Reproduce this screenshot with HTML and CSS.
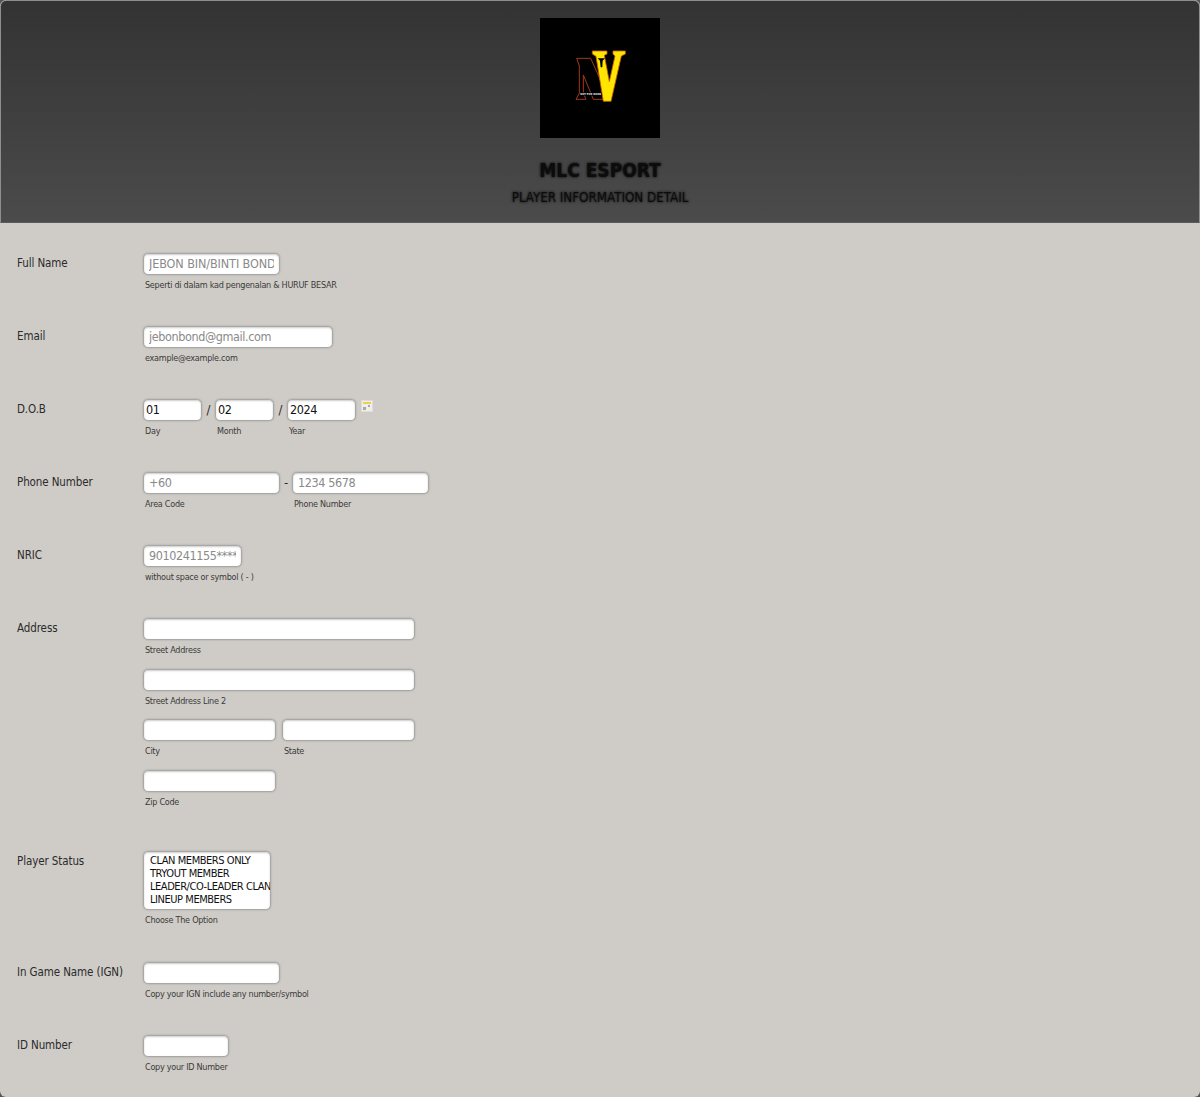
FILE: index.html
```html
<!DOCTYPE html>
<html lang="ms">
<head>
    <meta charset="UTF-8">
    <meta name="viewport" content="width=device-width, initial-scale=1.0">
    <title>MLC ESPORT</title>
    <link rel="stylesheet" href="styles.css">
</head>
<body>
    <div class="form-all">
        <div class="header">
            <div class="logo">
                <svg width="120" height="120" viewBox="0 0 120 120">
                    <g transform="translate(20 22) scale(0.3333)">
                        <path d="M50 55 H92 L135 150 V178 H100 L70 105 V160 L78 178 H48 L58 160 V78 Z" fill="#000" stroke="#a03a1a" stroke-width="3"/>
                        <path d="M97 33 H141 V42 L133 46 L148 125 L165 48 L159 42 V33 H196 V42 L184 48 L153 184 H130 L108 49 L97 42 Z" fill="#ffe600" stroke="#c8640a" stroke-width="2.5"/>
                        <path d="M113 55 H135 L128 62 L127 82 H122 L120 62 Z" fill="#000"/>
                        <rect x="60" y="157" width="64" height="10" fill="#000"/>
                        <text x="92" y="165" class="logo-text" text-anchor="middle">NOT FOR NOOB</text>
                    </g>
                </svg>
            </div>
            <h1>MLC ESPORT</h1>
            <h2>PLAYER INFORMATION DETAIL</h2>
        </div>
        <ul class="form-list">
            <li class="row">
                <label class="row-label">Full Name</label>
                <div class="field">
                    <input class="w-137 caps" type="text" placeholder="JEBON BIN/BINTI BOND">
                    <span class="sub">Seperti di dalam kad pengenalan &amp; HURUF BESAR</span>
                </div>
            </li>
            <li class="row">
                <label class="row-label">Email</label>
                <div class="field">
                    <input class="w-190" type="text" placeholder="jebonbond@gmail.com">
                    <span class="sub">example@example.com</span>
                </div>
            </li>
            <li class="row">
                <label class="row-label">D.O.B</label>
                <div class="inline">
                    <div class="field">
                        <input class="w-59 date" type="text" value="01">
                        <span class="sub">Day</span>
                    </div>
                    <span class="sep">/</span>
                    <div class="field">
                        <input class="w-59 date" type="text" value="02">
                        <span class="sub">Month</span>
                    </div>
                    <span class="sep">/</span>
                    <div class="field">
                        <input class="w-69 date" type="text" value="2024">
                        <span class="sub">Year</span>
                    </div>
                    <svg class="cal" width="12" height="12" viewBox="0 0 12 12">
                        <rect width="12" height="12" fill="#dfddd8"/>
                        <rect x="1" y="1" width="10" height="10" fill="#efeeea"/>
                        <rect x="2" y="2" width="8" height="2" fill="#ecd04e"/>
                        <rect x="2" y="7" width="3" height="3" fill="#a9a9a9"/>
                        <rect x="7" y="5" width="2" height="2" fill="#a9a9a9"/>
                    </svg>
                </div>
            </li>
            <li class="row">
                <label class="row-label">Phone Number</label>
                <div class="inline">
                    <div class="field">
                        <input class="w-137" type="text" placeholder="+60">
                        <span class="sub">Area Code</span>
                    </div>
                    <span class="sep dash">-</span>
                    <div class="field">
                        <input class="w-137" type="text" placeholder="1234 5678">
                        <span class="sub">Phone Number</span>
                    </div>
                </div>
            </li>
            <li class="row">
                <label class="row-label">NRIC</label>
                <div class="field">
                    <input class="w-99" type="text" placeholder="9010241155*****">
                    <span class="sub">without space or symbol ( - )</span>
                </div>
            </li>
            <li class="row row-address">
                <label class="row-label">Address</label>
                <div class="address">
                    <div class="field wide">
                        <input type="text">
                        <span class="sub">Street Address</span>
                    </div>
                    <div class="field wide">
                        <input type="text">
                        <span class="sub">Street Address Line 2</span>
                    </div>
                    <div class="field half">
                        <input type="text">
                        <span class="sub">City</span>
                    </div>
                    <div class="field half">
                        <input type="text">
                        <span class="sub">State</span>
                    </div>
                    <div class="field half">
                        <input type="text">
                        <span class="sub">Zip Code</span>
                    </div>
                </div>
            </li>
            <li class="row row-status">
                <label class="row-label">Player Status</label>
                <div class="field">
                    <div class="listbox">
                        <div>CLAN MEMBERS ONLY</div>
                        <div>TRYOUT MEMBER</div>
                        <div>LEADER/CO-LEADER CLAN</div>
                        <div>LINEUP MEMBERS</div>
                    </div>
                    <span class="sub">Choose The Option</span>
                </div>
            </li>
            <li class="row">
                <label class="row-label">In Game Name (IGN)</label>
                <div class="field">
                    <input class="w-137" type="text">
                    <span class="sub">Copy your IGN include any number/symbol</span>
                </div>
            </li>
            <li class="row">
                <label class="row-label">ID Number</label>
                <div class="field">
                    <input class="w-86" type="text">
                    <span class="sub">Copy your ID Number</span>
                </div>
            </li>
        </ul>
    </div>
</body>
</html>
```

FILE: styles.css
```css
html, body {
    margin: 0;
    padding: 0;
    background-color: #555;
}
body {
    font-family: "DejaVu Sans Condensed", "DejaVu Sans", sans-serif;
    font-size: 11.5px;
    color: #2b2b2b;
    overflow: hidden;
    height: 1097px;
}
.form-all {
    height: 1097px;
    background-color: #cfccc7;
    border-radius: 6px;
    overflow: hidden;
}
.header {
    height: 223px;
    box-sizing: border-box;
    padding-top: 17px;
    text-align: center;
    background: linear-gradient(#333, #4b4b4b);
    border: 1px solid #8f8f8f;
    border-bottom: 1px solid #5a5a5a;
    border-radius: 6px 6px 0 0;
}
.logo {
    width: 120px;
    height: 120px;
    margin: 0 auto;
    background-color: #000;
}
.logo svg {
    display: block;
}
.logo-text {
    font-size: 8px;
    font-weight: bold;
    fill: #e8e8e8;
}
h1 {
    margin: 19px 0 0;
    font-size: 19px;
    line-height: 26px;
    font-weight: bold;
    color: #0c0c0c;
    text-shadow: 0 0 3px #000;
}
h2 {
    margin: 6px 0 0;
    font-size: 13.25px;
    line-height: 18px;
    font-weight: normal;
    color: #0c0c0c;
    text-shadow: 0 0 3px #000;
}
.form-list {
    list-style: none;
    margin: 0;
    padding: 30px 0 0 17px;
}
.row {
    display: flex;
    margin-bottom: 35px;
}
.row-address {
    margin-bottom: 43px;
}
.row-status {
    margin-bottom: 36px;
}
.row-label {
    width: 126px;
    flex: none;
    padding-top: 3px;
    line-height: 15px;
    letter-spacing: -0.1px;
}
.field {
    display: flex;
    flex-direction: column;
    align-items: flex-start;
}
.inline {
    display: flex;
    align-items: flex-start;
}
input, .listbox {
    box-sizing: border-box;
    border: 1px solid #aaa8a4;
    border-radius: 5px;
    background-color: #fff;
    box-shadow: inset 0 1px 2px #ccc, 0 0 2px #a0a0a0;
}
input {
    height: 22px;
    width: 100%;
    padding: 0 5px 1px;
    font-family: inherit;
    font-size: 12.5px;
    letter-spacing: -0.4px;
    color: #111;
    outline: none;
}
input::placeholder {
    color: #8a8a8a;
    opacity: 1;
}
input.caps {
    letter-spacing: -0.1px;
}
input.date {
    padding: 0 2px 1px;
}
input.w-137 { width: 137px; }
input.w-190 { width: 190px; }
input.w-59 { width: 59px; }
input.w-69 { width: 69px; }
input.w-99 { width: 99px; }
input.w-86 { width: 86px; }
.sub {
    margin: 4px 0 0 2px;
    font-size: 9px;
    line-height: 12px;
    letter-spacing: -0.27px;
    color: #3a3a3a;
}
.sep {
    width: 13px;
    text-align: center;
    line-height: 22px;
    font-size: 13px;
}
.sep.dash {
    width: 12px;
}
.cal {
    margin-left: 5px;
    margin-top: 1px;
}
.address {
    display: flex;
    flex-wrap: wrap;
    width: 272px;
    column-gap: 6px;
    row-gap: 12.6px;
}
.wide {
    width: 272px;
}
.half {
    width: 133px;
}
.listbox {
    width: 128px;
    height: 59px;
    padding: 3.5px 0 0 6px;
    font-size: 11px;
    letter-spacing: -0.45px;
    line-height: 12.8px;
    white-space: nowrap;
    overflow: hidden;
    color: #111;
}
```
